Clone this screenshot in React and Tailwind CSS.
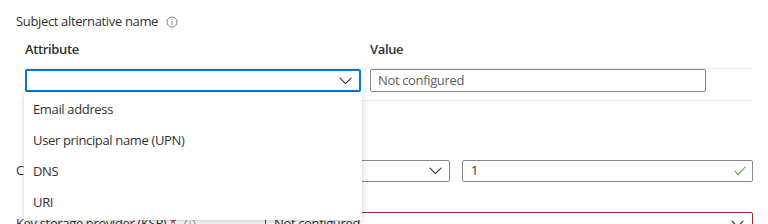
import React from 'react';

const font = { fontFamily: '"Open Sans", "Noto Sans", "Liberation Sans", sans-serif' };

function InfoIcon() {
  return (
    <svg width="12" height="12" viewBox="0 0 12 12" fill="none" stroke="#797775" strokeWidth="0.9">
      <circle cx="6" cy="6" r="5" />
      <path d="M6 5.2v3.4" strokeLinecap="round" />
      <circle cx="6" cy="3.6" r="0.5" fill="#797775" stroke="none" />
    </svg>
  );
}

function Chevron() {
  return (
    <svg width="13" height="8" viewBox="0 0 13 8" fill="none" stroke="#323130" strokeWidth="1.1" strokeLinecap="round" strokeLinejoin="round">
      <path d="M1 1.2l5.5 5.5L12 1.2" />
    </svg>
  );
}

function Check() {
  return (
    <svg width="12" height="10" viewBox="0 0 12 10" fill="none" stroke="#6bb345" strokeWidth="1.2" strokeLinecap="round" strokeLinejoin="round">
      <path d="M1 5.2l3.2 3.3L11 1.2" />
    </svg>
  );
}

const options = ['Email address', 'User principal name (UPN)', 'DNS', 'URI'];

export default function App() {
  return (
    <div className="relative w-[768px] h-[224px] overflow-hidden bg-white text-[13px] tracking-[-0.35px] text-[#323130]" style={font}>
      <div className="flex items-center gap-[8px] h-[18px] pl-4 mt-[13px]">
        <span>Subject alternative name</span>
        <InfoIcon />
      </div>

      <div className="ml-[24px] w-[728px]">
        <div className="flex items-center h-[18px] mt-[10px] font-semibold">
          <div className="w-[346px] pl-[1px]">Attribute</div>
          <div>Value</div>
        </div>
        <div className="mt-[9px] border-y border-[#edebe9] pb-[8px] pl-[1px] flex gap-[9px]">
          <div className="w-[336px] h-[23px] border-2 border-[#0078d4] rounded-[2px] flex items-center justify-end pr-[7px]">
            <Chevron />
          </div>
          <div className="w-[336px] h-[23px] border border-[#8a8886] rounded-[2px] flex items-center px-[7px] text-[#605e5c]">
            Not configured
          </div>
        </div>
      </div>

      <div className="flex items-center pl-4 mt-[59px] h-[22px]">
        <div className="w-[249px]">Certificate validity period</div>
        <div className="flex gap-[12px]">
          <div className="w-[185px] h-[22px] border border-[#8a8886] rounded-[2px] flex items-center justify-end pr-[7px]">
            <Chevron />
          </div>
          <div className="w-[291px] h-[22px] border border-[#8a8886] rounded-[2px] flex items-center justify-between pl-[8px] pr-[6px]">
            <span>1</span>
            <Check />
          </div>
        </div>
      </div>

      <div className="flex items-center pl-4 mt-[30px] h-[24px]">
        <div className="w-[249px] flex items-center gap-[8px]">
          <span>
            Key storage provider (KSP) <span className="text-[#a4262c]">*</span>
          </span>
          <InfoIcon />
        </div>
        <div className="w-[488px] h-[24px] border border-[#a4262c] rounded-[2px] flex items-center justify-between px-[8px]">
          <span>Not configured</span>
          <Chevron />
        </div>
      </div>

      <div className="absolute left-[24px] top-[92px] w-[338px] py-[2px] bg-white shadow-[0_3px_7px_rgba(0,0,0,0.14),0_0_2px_rgba(0,0,0,0.1)]">
        {options.map((o) => (
          <div key={o} className="h-[31px] flex items-center pl-[9px]">
            {o}
          </div>
        ))}
      </div>
    </div>
  );
}
